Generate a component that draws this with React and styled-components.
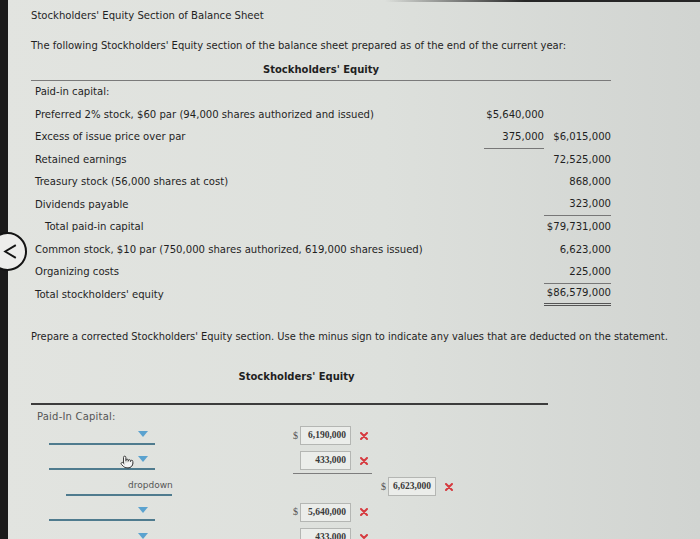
import React from "react";
import styled, { createGlobalStyle } from "styled-components";
import { Pointer } from "lucide-react";

const GlobalStyle = createGlobalStyle`
  html, body {
    margin: 0;
    padding: 0;
  }
  body {
    width: 700px;
    height: 539px;
    overflow: hidden;
    font-family: "DejaVu Sans", Verdana, sans-serif;
  }
`;

const Screen = styled.div`
  position: relative;
  display: flex;
  width: 700px;
  height: 539px;
  overflow: hidden;
  background:
    linear-gradient(90deg, transparent 55%, #262626 75%) top / 100% 2px no-repeat,
    linear-gradient(90deg, #e2e4e0 0%, #dde0dc 55%, #d1d4d1 100%);
`;

const Bezel = styled.div`
  flex: none;
  width: 8px;
  background: #1b1b1b;
`;

const Content = styled.div`
  flex: 1;
  padding: 10px 0 0 23px;
  color: #1f1f1f;
  font-size: 10px;
  line-height: 12px;
`;

const Title = styled.div`
  font-size: 10.1px;
`;

const Intro = styled.div`
  margin-top: 18px;
`;

const Sheet = styled.div`
  width: ${(p) => p.$width}px;
  margin-top: ${(p) => p.$top}px;
`;

const Heading = styled.div`
  padding: 0 0 ${(p) => p.$pad}px ${(p) => p.$shift || 0}px;
  text-align: center;
  font-weight: bold;
  border-bottom: ${(p) => p.$line};
`;

const Row = styled.div`
  display: grid;
  grid-template-columns: 1fr 60px 67px;
  align-items: center;
  height: 22.5px;
  padding-left: 4px;
  font-size: 10.1px;
`;

const Label = styled.div`
  padding-left: ${(p) => (p.$indent ? 10 : 0)}px;
`;

const Num = styled.div`
  box-sizing: border-box;
  display: flex;
  align-items: center;
  justify-content: flex-end;
  height: 100%;
  border-bottom: ${(p) =>
    p.$rule === "double" ? "3px double #555" : p.$rule ? "1px solid #777" : "none"};
`;

const Prompt = styled.div`
  margin-top: 25px;
  font-size: 9.9px;
`;

const SubLabel = styled.div`
  margin-top: 6px;
  padding-left: 6px;
  color: #555;
  letter-spacing: 0.2px;
`;

const EntryRow = styled.div`
  display: grid;
  grid-template-columns: 262px 80px 1fr;
  height: 25.5px;
`;

const DropCell = styled.div`
  display: flex;
  align-items: flex-end;
  padding-bottom: 4px;
  padding-left: ${(p) => (p.$indent ? 35 : 18)}px;
  box-sizing: border-box;
`;

const Dropdown = styled.div`
  position: relative;
  width: 106px;
  height: 18px;
  border-bottom: 2px solid #4f7b8e;
`;

const Arrow = styled.span`
  position: absolute;
  right: 7px;
  top: 6px;
  width: 0;
  height: 0;
  border-left: 5px solid transparent;
  border-right: 5px solid transparent;
  border-top: 6px solid #5aa2cf;
`;

const Tooltip = styled.span`
  position: absolute;
  left: 60px;
  top: 3px;
  padding: 0 2px;
  background: #e0e2df;
  color: #555;
  font-size: 9px;
`;

const Cursor = styled.span`
  position: absolute;
  left: 71px;
  top: 5px;
  display: flex;
`;

const AmountCell = styled.div`
  display: flex;
  align-items: center;
  box-sizing: border-box;
  height: 100%;
  padding-left: ${(p) => p.$pad}px;
  border-bottom: ${(p) => (p.$rule ? "1px solid #7d7d7d" : "none")};
  margin-right: ${(p) => (p.$rule ? 1 : 0)}px;
`;

const Dollar = styled.span`
  width: 7px;
  color: #555;
  font-family: "Liberation Serif", serif;
  font-size: 10px;
`;

const Box = styled.div`
  box-sizing: border-box;
  width: ${(p) => p.$w}px;
  height: 19px;
  padding-right: 4px;
  border: 1px solid #b4b6b3;
  background: #ebedea;
  color: #3a3a3a;
  font-family: "Liberation Serif", serif;
  font-size: 9.5px;
  font-weight: bold;
  line-height: 17px;
  text-align: right;
`;

const Wrong = styled.svg`
  margin-left: 9px;
`;

const BackButton = styled.div`
  position: absolute;
  left: -12px;
  top: 232px;
  box-sizing: border-box;
  width: 39px;
  height: 39px;
  border: 2px solid #141414;
  border-radius: 50%;
  background: #ededeb;
  display: flex;
  align-items: center;
  justify-content: flex-end;
  padding-right: 6px;
`;

const Cross = () => (
  <Wrong width="8" height="8" viewBox="0 0 8 8">
    <path d="M1 1 L7 7 M7 1 L1 7" stroke="#d63a3f" strokeWidth="2" strokeLinecap="round" />
  </Wrong>
);

const Amount = ({ value, dollar, w = 51, pad = 0, rule }) => (
  <AmountCell $pad={pad} $rule={rule}>
    <Dollar>{dollar ? "$" : ""}</Dollar>
    <Box $w={w}>{value}</Box>
    <Cross />
  </AmountCell>
);

const rows = [
  { label: "Paid-in capital:" },
  { label: "Preferred 2% stock, $60 par (94,000 shares authorized and issued)", a: "$5,640,000" },
  { label: "Excess of issue price over par", a: "375,000", aRule: true, b: "$6,015,000" },
  { label: "Retained earnings", b: "72,525,000" },
  { label: "Treasury stock (56,000 shares at cost)", b: "868,000" },
  { label: "Dividends payable", b: "323,000", bRule: true },
  { label: "Total paid-in capital", indent: true, b: "$79,731,000" },
  { label: "Common stock, $10 par (750,000 shares authorized, 619,000 shares issued)", b: "6,623,000" },
  { label: "Organizing costs", b: "225,000", bRule: true },
  { label: "Total stockholders' equity", b: "$86,579,000", bRule: "double" },
];

export default function App() {
  return (
    <>
      <GlobalStyle />
      <Screen>
        <Bezel />
        <Content>
          <Title>Stockholders' Equity Section of Balance Sheet</Title>
          <Intro>
            The following Stockholders' Equity section of the balance sheet prepared as of the end of
            the current year:
          </Intro>

          <Sheet $width={580} $top={12}>
            <Heading $pad={4} $line="1px solid #7a7a7a">
              Stockholders' Equity
            </Heading>
            {rows.map((r) => (
              <Row key={r.label}>
                <Label $indent={r.indent}>{r.label}</Label>
                <Num $rule={r.aRule}>{r.a}</Num>
                <Num $rule={r.bRule}>{r.b}</Num>
              </Row>
            ))}
          </Sheet>

          <Prompt>
            Prepare a corrected Stockholders' Equity section. Use the minus sign to indicate any values
            that are deducted on the statement.
          </Prompt>

          <Sheet $width={517} $top={28}>
            <Heading $pad={20} $shift={14} $line="2px solid #3c3c3c">
              Stockholders' Equity
            </Heading>
            <SubLabel>Paid-In Capital:</SubLabel>

            <EntryRow>
              <DropCell>
                <Dropdown>
                  <Arrow />
                </Dropdown>
              </DropCell>
              <Amount value="6,190,000" dollar />
              <div />
            </EntryRow>

            <EntryRow>
              <DropCell>
                <Dropdown>
                  <Arrow />
                  <Cursor>
                    <Pointer size={14} color="#333" fill="#f4f4f4" strokeWidth={1.6} />
                  </Cursor>
                </Dropdown>
              </DropCell>
              <Amount value="433,000" rule />
              <div />
            </EntryRow>

            <EntryRow>
              <DropCell $indent>
                <Dropdown>
                  <Arrow />
                  <Tooltip>dropdown</Tooltip>
                </Dropdown>
              </DropCell>
              <div />
              <Amount value="6,623,000" dollar w={48} pad={8} />
            </EntryRow>

            <EntryRow>
              <DropCell>
                <Dropdown>
                  <Arrow />
                </Dropdown>
              </DropCell>
              <Amount value="5,640,000" dollar />
              <div />
            </EntryRow>

            <EntryRow>
              <DropCell>
                <Dropdown>
                  <Arrow />
                </Dropdown>
              </DropCell>
              <Amount value="433,000" />
              <div />
            </EntryRow>
          </Sheet>
        </Content>

        <BackButton>
          <svg width="17" height="17" viewBox="0 0 16 16">
            <path d="M13 2 L3 8 L13 14" fill="none" stroke="#141414" strokeWidth="1.8" />
          </svg>
        </BackButton>
      </Screen>
    </>
  );
}
